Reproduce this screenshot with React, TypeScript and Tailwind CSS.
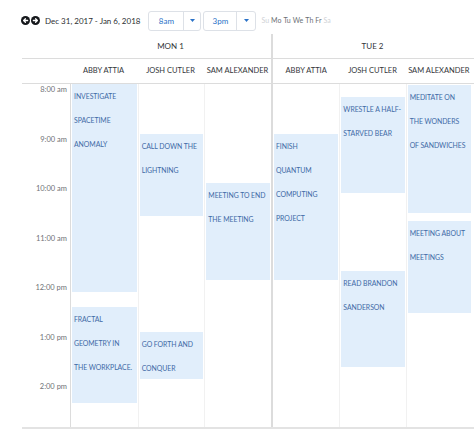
import React from "react";

type CalEvent = { start: number; end: number; lines: string[] };

const HOUR = 49.5;

const people = ["ABBY ATTIA", "JOSH CUTLER", "SAM ALEXANDER"];
const hours = ["8:00 am", "9:00 am", "10:00 am", "11:00 am", "12:00 pm", "1:00 pm", "2:00 pm"];

const days: { label: string; columns: CalEvent[][] }[] = [
  {
    label: "MON 1",
    columns: [
      [
        { start: 0, end: 4.2, lines: ["INVESTIGATE", "SPACETIME", "ANOMALY"] },
        { start: 4.5, end: 6.45, lines: ["FRACTAL", "GEOMETRY IN", "THE WORKPLACE."] }
      ],
      [
        { start: 1, end: 2.67, lines: ["CALL DOWN THE", "LIGHTNING"] },
        { start: 5, end: 5.95, lines: ["GO FORTH AND", "CONQUER"] }
      ],
      [{ start: 2, end: 3.95, lines: ["MEETING TO END", "THE MEETING"] }]
    ]
  },
  {
    label: "TUE 2",
    columns: [
      [{ start: 1, end: 3.95, lines: ["FINISH", "QUANTUM", "COMPUTING", "PROJECT"] }],
      [
        { start: 0.26, end: 2.2, lines: ["WRESTLE A HALF-", "STARVED BEAR"] },
        { start: 3.78, end: 5.72, lines: ["READ BRANDON", "SANDERSON"] }
      ],
      [
        { start: 0.02, end: 2.6, lines: ["MEDITATE ON", "THE WONDERS", "OF SANDWICHES"] },
        { start: 2.77, end: 4.63, lines: ["MEETING ABOUT", "MEETINGS"] }
      ]
    ]
  }
];

function CircleArrow({ dir }: { dir: "left" | "right" }) {
  return (
    <svg width="9" height="9" viewBox="0 0 10 10" aria-hidden>
      <circle cx="5" cy="5" r="5" fill="#16181c" />
      {dir === "left" ? (
        <path d="M7.4 5H3M4.9 3 2.9 5l2 2" stroke="#fff" strokeWidth="1.4" fill="none" strokeLinecap="round" strokeLinejoin="round" />
      ) : (
        <path d="M2.6 5H7M5.1 3l2 2-2 2" stroke="#fff" strokeWidth="1.4" fill="none" strokeLinecap="round" strokeLinejoin="round" />
      )}
    </svg>
  );
}

function TimePicker({ value, w, cw }: { value: string; w: string; cw: string }) {
  return (
    <div className="flex h-[20px] rounded-[3px] border border-[#dde1e7] bg-white text-[8px] text-[#2a72c8]">
      <span className={`flex items-center justify-center border-r border-[#dde1e7] ${w}`}>{value}</span>
      <span className={`flex items-center justify-center ${cw}`}>
        <svg width="5" height="3" viewBox="0 0 5 3" aria-hidden>
          <path d="M0 0h5L2.5 3z" fill="#2a72c8" />
        </svg>
      </span>
    </div>
  );
}

export default function App() {
  return (
    <div className="h-[436px] w-[474px] overflow-hidden bg-white font-['Lato',_'Liberation_Sans',_sans-serif]">
      {/* toolbar */}
      <div className="flex h-[34px] items-center pl-[21px] pt-[7px]">
        <div className="flex gap-[1px]">
          <CircleArrow dir="left" />
          <CircleArrow dir="right" />
        </div>
        <span className="ml-[5px] text-[8px] text-[#2d2f33]">Dec 31, 2017 - Jan 6, 2018</span>
        <div className="ml-[8px] flex gap-[2px]">
          <TimePicker value="8am" w="w-[35px]" cw="w-[16px]" />
          <TimePicker value="3pm" w="w-[33px]" cw="w-[18px]" />
        </div>
        <div className="ml-[5px] flex gap-[2px] text-[7px] text-[#6b6f75]">
          <span className="text-[#cfd2d6]">Su</span>
          <span>Mo</span>
          <span>Tu</span>
          <span>We</span>
          <span>Th</span>
          <span>Fr</span>
          <span className="text-[#cfd2d6]">Sa</span>
        </div>
      </div>

      <div className="ml-[22px]">
        {/* day header */}
        <div className="flex h-[25px] border-b border-[#dcdcdc] text-[8px] text-[#33363a]">
          <div className="w-[48px]" />
          {days.map((d, i) => (
            <div
              key={d.label}
              className={`flex w-[201px] items-center justify-center ${i > 0 ? "border-l-2 border-[#dcdcdc]" : ""}`}
            >
              {d.label}
            </div>
          ))}
        </div>

        {/* names */}
        <div className="flex h-[25px] border-b border-[#dcdcdc] text-[7.5px] text-[#33363a]">
          <div className="w-[48px]" />
          {days.map((d, i) => (
            <div
              key={d.label}
              className={`grid w-[201px] grid-cols-3 ${i > 0 ? "border-l-2 border-[#dcdcdc]" : ""}`}
            >
              {people.map((p) => (
                <div key={p} className="flex items-center justify-center whitespace-nowrap">
                  {p}
                </div>
              ))}
            </div>
          ))}
        </div>

        {/* body */}
        <div className="flex h-[345px] overflow-hidden border-b-2 border-[#e3e3e3]">
          <div className="flex w-[48px] flex-col">
            {hours.map((h) => (
              <div key={h} className="h-[49.5px] shrink-0 pr-[3px] pt-[1px] text-right text-[7.5px] leading-[10px] text-[#6f7276]">
                {h}
              </div>
            ))}
          </div>
          {days.map((d, i) => (
            <div
              key={d.label}
              className={`grid w-[201px] grid-cols-3 ${i > 0 ? "border-l-2 border-[#dcdcdc]" : "border-l border-[#dcdcdc]"}`}
            >
              {d.columns.map((col, ci) => (
                <div key={ci} className={`relative ${ci > 0 ? "border-l border-[#f1f1f1]" : ""}`}>
                  {col.map((ev) => (
                    <div
                      key={ev.lines[0]}
                      className="absolute left-[1px] right-[1px] overflow-hidden bg-[#e1eefb] px-[2px] text-[6.9px] leading-[24px] tracking-[-0.05px] text-[#3f6aa6]"
                      style={{ top: ev.start * HOUR, height: (ev.end - ev.start) * HOUR }}
                    >
                      {ev.lines.map((l) => (
                        <div key={l} className="whitespace-nowrap">
                          {l}
                        </div>
                      ))}
                    </div>
                  ))}
                </div>
              ))}
            </div>
          ))}
        </div>
      </div>
    </div>
  );
}
